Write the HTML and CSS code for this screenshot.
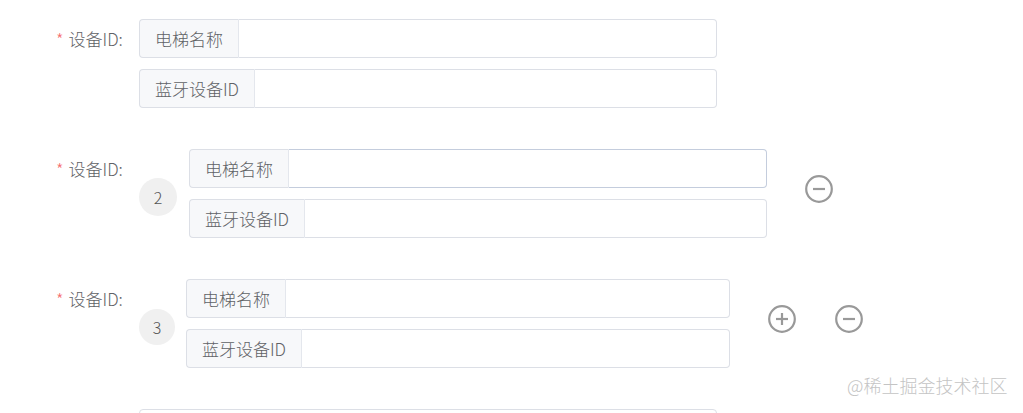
FILE: index.html
```html
<!DOCTYPE html>
<html lang="zh-CN">
<head>
<meta charset="utf-8">
<title>设备表单</title>
<link rel="stylesheet" href="styles.css">
</head>
<body>
<div class="page">
<div class="form">
  <div class="item">
    <div class="label"><span class="star">*</span>设备ID:</div>
    <div class="content">
      <div class="fields w-wide">
        <div class="input-group"><span class="prepend">电梯名称</span><div class="field"></div></div>
        <div class="input-group"><span class="prepend">蓝牙设备ID</span><div class="field"></div></div>
      </div>
    </div>
  </div>

  <div class="item">
    <div class="label"><span class="star">*</span>设备ID:</div>
    <div class="content">
      <div class="index idx-2">2</div>
      <div class="fields w-wide">
        <div class="input-group hover"><span class="prepend">电梯名称</span><div class="field"></div></div>
        <div class="input-group"><span class="prepend">蓝牙设备ID</span><div class="field"></div></div>
      </div>
      <div class="actions">
        <span class="icon-btn">
          <svg viewBox="0 0 28 28" width="28" height="28"><circle cx="14" cy="14" r="12.8" fill="none" stroke="#999" stroke-width="2.2"/><line x1="8" y1="14" x2="20" y2="14" stroke="#999" stroke-width="2.2"/></svg>
        </span>
      </div>
    </div>
  </div>

  <div class="item">
    <div class="label"><span class="star">*</span>设备ID:</div>
    <div class="content">
      <div class="index idx-3">3</div>
      <div class="fields w-narrow">
        <div class="input-group"><span class="prepend">电梯名称</span><div class="field"></div></div>
        <div class="input-group"><span class="prepend">蓝牙设备ID</span><div class="field"></div></div>
      </div>
      <div class="actions">
        <span class="icon-btn">
          <svg viewBox="0 0 28 28" width="28" height="28"><circle cx="14" cy="14" r="12.8" fill="none" stroke="#999" stroke-width="2.2"/><line x1="8" y1="14" x2="20" y2="14" stroke="#999" stroke-width="2.2"/><line x1="14" y1="8" x2="14" y2="20" stroke="#999" stroke-width="2.2"/></svg>
        </span>
        <span class="icon-btn">
          <svg viewBox="0 0 28 28" width="28" height="28"><circle cx="14" cy="14" r="12.8" fill="none" stroke="#999" stroke-width="2.2"/><line x1="8" y1="14" x2="20" y2="14" stroke="#999" stroke-width="2.2"/></svg>
        </span>
      </div>
    </div>
  </div>

  <div class="item">
    <div class="label"></div>
    <div class="content">
      <div class="fields w-wide">
        <div class="input-group"><div class="field"></div></div>
      </div>
    </div>
  </div>
</div>
<div class="watermark">@稀土掘金技术社区</div>
</div>
</body>
</html>
```
FILE: styles.css
```css
html, body {
  margin: 0;
  padding: 0;
  background: #fff;
}
body {
  font-family: "Noto Sans CJK SC", "Noto Sans", sans-serif;
  font-size: 17px;
  font-weight: 300;
  color: #5f6266;
}
.page {
  position: relative;
  height: 413px;
  overflow: hidden;
}
.form {
  padding-top: 19px;
}
.item {
  display: flex;
  align-items: flex-start;
  margin-bottom: 41px;
}
.label {
  width: 139px;
  box-sizing: border-box;
  padding-left: 56px;
  line-height: 39px;
  height: 39px;
  white-space: nowrap;
  flex: none;
}
.star {
  color: #f56c6c;
  margin-right: 5px;
}
.content {
  display: flex;
  align-items: center;
}
.fields {
  display: flex;
  flex-direction: column;
  gap: 11px;
}
.w-wide { width: 578px; }
.w-narrow { width: 544px; }
.input-group {
  display: flex;
  height: 39px;
  box-sizing: border-box;
}
.prepend {
  flex: none;
  background: #f7f8fa;
  border: 1px solid #dcdfe6;
  border-right: 1px solid #e4e7ed;
  border-radius: 4px 0 0 4px;
  padding: 0 15px;
  line-height: 37px;
  white-space: nowrap;
}
.field {
  flex: 1;
  border: 1px solid #dcdfe6;
  border-radius: 0 4px 4px 0;
  background: #fff;
}
.prepend + .field {
  border-left: none;
}
.input-group > .field:first-child {
  border-radius: 4px;
}
.hover .field {
  border-color: #c4cddd;
}
.index {
  flex: none;
  width: 38px;
  height: 38px;
  border-radius: 50%;
  background: #f0f0f0;
  display: flex;
  align-items: center;
  justify-content: center;
  color: #555;
  font-size: 16px;
  margin-top: 6px;
}
.idx-2 { margin-right: 12px; }
.idx-3 { width: 36px; height: 36px; margin-right: 11px; }
.actions {
  display: flex;
  gap: 39px;
  margin-left: 38px;
  margin-bottom: 9px;
}
.icon-btn {
  display: block;
  width: 28px;
  height: 28px;
}
.icon-btn svg { display: block; }
.watermark {
  position: absolute;
  left: 847px;
  top: 372px;
  font-size: 18px;
  color: #c4c4c4;
  white-space: nowrap;
}
```
